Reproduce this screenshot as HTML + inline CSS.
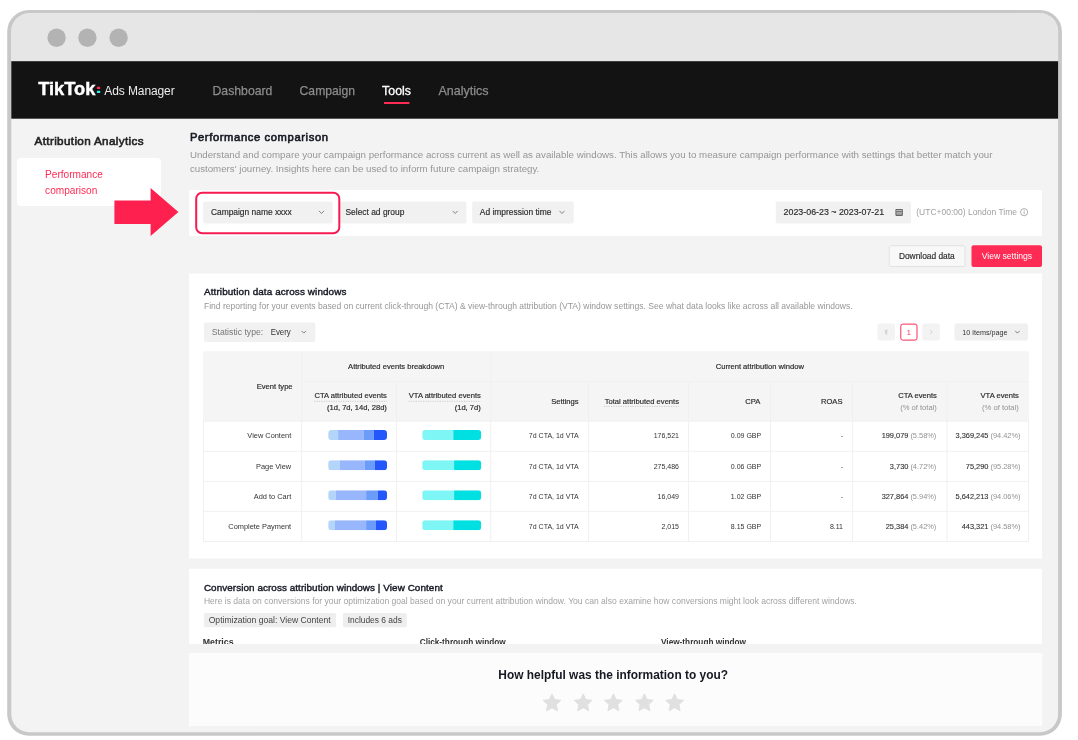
<!DOCTYPE html>
<html><head><meta charset="utf-8"><title>TikTok Ads Manager - Performance comparison</title>
<style>html,body{margin:0;padding:0;background:#fff;width:1078px;height:740px;overflow:hidden}svg{display:block;will-change:transform}text{font-family:"Liberation Sans", sans-serif}</style>
</head><body>
<svg width="1078" height="740" viewBox="0 0 1078 740" font-family='"Liberation Sans", sans-serif'><rect x="0.00" y="0.00" width="1078.00" height="740.00" fill="#ffffff"/>
<rect x="7.20" y="10.10" width="1054.70" height="725.60" fill="#c8c8c8" rx="21.5"/>
<defs><clipPath id="fc"><rect x="11.3" y="13.3" width="1046.8" height="718.9" rx="18"/></clipPath></defs>
<g clip-path="url(#fc)">
<rect x="11.00" y="13.00" width="1048.00" height="720.00" fill="#f3f3f3"/>
<rect x="11.00" y="13.00" width="1048.00" height="48.20" fill="#e6e6e6"/>
<circle cx="56.6" cy="37.8" r="9.2" fill="#b3b3b3"/>
<circle cx="87.4" cy="37.8" r="9.2" fill="#b3b3b3"/>
<circle cx="118.6" cy="37.8" r="9.2" fill="#b3b3b3"/>
<rect x="11.00" y="61.20" width="1048.00" height="57.50" fill="#131313"/>
<text x="38.20" y="94.70" font-size="19.0" fill="#ffffff" font-weight="bold" textLength="57.30" lengthAdjust="spacingAndGlyphs" stroke="#ffffff" stroke-width="0.45">TikTok</text>
<rect x="96.90" y="86.80" width="3.30" height="2.20" fill="#fe2c55" rx="0.6"/>
<rect x="96.90" y="90.80" width="3.30" height="2.20" fill="#25f4ee" rx="0.6"/>
<text x="104.30" y="94.60" font-size="12.0" fill="#ececec" textLength="70.40" lengthAdjust="spacing">Ads Manager</text>
<text x="212.50" y="94.50" font-size="12.6" fill="#8c8c8c" textLength="59.90" lengthAdjust="spacingAndGlyphs" stroke="#8c8c8c" stroke-width="0.25">Dashboard</text>
<text x="299.60" y="94.50" font-size="12.6" fill="#8c8c8c" textLength="55.40" lengthAdjust="spacingAndGlyphs" stroke="#8c8c8c" stroke-width="0.25">Campaign</text>
<text x="382.10" y="94.50" font-size="12.6" fill="#ffffff" textLength="28.90" lengthAdjust="spacingAndGlyphs" stroke="#ffffff" stroke-width="0.3">Tools</text>
<text x="438.50" y="94.50" font-size="12.6" fill="#8c8c8c" textLength="50.10" lengthAdjust="spacingAndGlyphs" stroke="#8c8c8c" stroke-width="0.25">Analytics</text>
<rect x="384.00" y="102.00" width="25.40" height="2.00" fill="#fe2c55"/>
<text x="34.60" y="145.30" font-size="11.7" fill="#222222" textLength="108.90" lengthAdjust="spacing" stroke="#222222" stroke-width="0.6">Attribution Analytics</text>
<rect x="17.00" y="158.00" width="144.00" height="48.00" fill="#ffffff" rx="4"/>
<text x="45.10" y="178.00" font-size="10.1" fill="#fe2c55">Performance</text>
<text x="45.10" y="193.90" font-size="10.1" fill="#fe2c55">comparison</text>
<polygon points="114.4,200.4 150.6,200.4 150.6,188.1 178.4,212 150.6,236.1 150.6,224 114.4,224" fill="#fe2150"/>
<text x="189.90" y="141.00" font-size="11.2" fill="#161823" textLength="138.10" lengthAdjust="spacing" stroke="#161823" stroke-width="0.6">Performance comparison</text>
<text x="189.90" y="157.60" font-size="9.73" fill="#969696">Understand and compare your campaign performance across current as well as available windows. This allows you to measure campaign performance with settings that better match your</text>
<text x="189.90" y="171.50" font-size="9.73" fill="#969696">customers&#x27; journey. Insights here can be used to inform future campaign strategy.</text>
<rect x="189.00" y="190.00" width="853.00" height="46.00" fill="#ffffff"/>
<rect x="203.20" y="201.40" width="129.40" height="22.20" fill="#f1f1f1" rx="2"/>
<text x="210.90" y="215.20" font-size="8.42" fill="#2a2a2a" stroke="#2a2a2a" stroke-width="0.15">Campaign name xxxx</text>
<path d="M319.00 210.90 L321.50 213.50 L324.00 210.90" fill="none" stroke="#777" stroke-width="0.9"/>
<rect x="340.00" y="201.40" width="126.50" height="22.20" fill="#f1f1f1" rx="2"/>
<text x="345.50" y="215.20" font-size="8.42" fill="#2a2a2a" stroke="#2a2a2a" stroke-width="0.15">Select ad group</text>
<path d="M452.70 210.90 L455.20 213.50 L457.70 210.90" fill="none" stroke="#777" stroke-width="0.9"/>
<rect x="472.20" y="201.40" width="101.50" height="22.20" fill="#f1f1f1" rx="2"/>
<text x="479.80" y="215.20" font-size="8.44" fill="#2a2a2a" stroke="#2a2a2a" stroke-width="0.15">Ad impression time</text>
<path d="M559.50 210.90 L562.00 213.50 L564.50 210.90" fill="none" stroke="#777" stroke-width="0.9"/>
<rect x="196.20" y="192.80" width="143.10" height="40.50" fill="none" rx="6" stroke="#f51a50" stroke-width="2"/>
<rect x="775.80" y="201.50" width="135.20" height="21.90" fill="#f1f1f1" rx="2"/>
<text x="783.60" y="215.30" font-size="8.85" fill="#2a2a2a" stroke="#2a2a2a" stroke-width="0.15">2023-06-23 ~ 2023-07-21</text>
<rect x="895.40" y="209.00" width="7.50" height="6.90" fill="#666666" rx="0.8"/>
<rect x="896.20" y="210.40" width="5.90" height="0.70" fill="#f1f1f1"/>
<rect x="896.40" y="211.90" width="5.50" height="2.80" fill="#a8a8a8"/>
<text x="916.30" y="215.30" font-size="8.49" fill="#a0a0a0">(UTC+00:00) London Time</text>
<circle cx="1024.1" cy="212.2" r="3.6" fill="none" stroke="#999" stroke-width="0.8"/>
<rect x="1023.70" y="211.30" width="0.80" height="3.00" fill="#999"/>
<rect x="1023.70" y="209.90" width="0.80" height="0.70" fill="#999"/>
<rect x="889.20" y="245.70" width="75.80" height="20.90" fill="#f8f8f8" rx="2" stroke="#e2e2e2" stroke-width="1"/>
<text x="898.90" y="258.90" font-size="8.4" fill="#2a2a2a" stroke="#2a2a2a" stroke-width="0.15">Download data</text>
<rect x="971.50" y="245.20" width="70.50" height="21.90" fill="#fe2c55" rx="2"/>
<text x="981.70" y="258.90" font-size="8.6" fill="#ffffff">View settings</text>
<rect x="189.00" y="273.50" width="853.00" height="285.00" fill="#ffffff"/>
<text x="204.00" y="295.20" font-size="9.9" fill="#161823" textLength="142.40" lengthAdjust="spacing" stroke="#161823" stroke-width="0.42">Attribution data across windows</text>
<text x="204.00" y="308.90" font-size="8.55" fill="#969696">Find reporting for your events based on current click-through (CTA) &amp; view-through attribution (VTA) window settings. See what data looks like across all available windows.</text>
<rect x="203.90" y="322.50" width="111.40" height="19.50" fill="#f1f1f1" rx="2"/>
<text x="211.70" y="334.70" font-size="8.68" fill="#777777">Statistic type:</text>
<text x="270.70" y="334.70" font-size="8.6" fill="#333333" textLength="20.10" lengthAdjust="spacingAndGlyphs">Every</text>
<path d="M301.60 330.90 L303.80 333.10 L306.00 330.90" fill="none" stroke="#666" stroke-width="0.8"/>
<rect x="877.50" y="323.60" width="17.50" height="17.00" fill="#f3f3f3" rx="2"/>
<path d="M885.10 329.90 L886.20 334.30 L887.30 329.90" fill="none" stroke="#c8c8c8" stroke-width="0.8"/>
<rect x="900.80" y="324.10" width="16.20" height="16.00" fill="#ffffff" rx="2" stroke="#fe2c55" stroke-width="1"/>
<text x="908.90" y="335.00" font-size="7.4" fill="#fe2c55" text-anchor="middle">1</text>
<rect x="922.30" y="323.60" width="17.60" height="17.00" fill="#f3f3f3" rx="2"/>
<rect x="954.50" y="323.60" width="73.50" height="17.00" fill="#f0f0f0" rx="2"/>
<text x="962.30" y="335.00" font-size="7.7" fill="#333333" textLength="45.20" lengthAdjust="spacingAndGlyphs">10 items/page</text>
<path d="M1015.20 330.90 L1017.40 333.10 L1019.60 330.90" fill="none" stroke="#666" stroke-width="0.8"/>
<path d="M887.3 329.9 L885.1 332.1 L887.3 334.3" fill="none" stroke="#cccccc" stroke-width="0.8"/>
<path d="M930.0 329.9 L932.2 332.1 L930.0 334.3" fill="none" stroke="#cccccc" stroke-width="0.8"/>
<rect x="203.00" y="351.20" width="826.00" height="69.90" fill="#f5f5f5"/>
<rect x="301.70" y="381.00" width="727.30" height="1.00" fill="#f0f0f0"/>
<rect x="203.00" y="420.60" width="826.00" height="1.00" fill="#f0f0f0"/>
<rect x="203.00" y="450.80" width="826.00" height="1.00" fill="#f0f0f0"/>
<rect x="203.00" y="480.90" width="826.00" height="1.00" fill="#f0f0f0"/>
<rect x="203.00" y="510.80" width="826.00" height="1.00" fill="#f0f0f0"/>
<rect x="203.00" y="541.00" width="826.00" height="1.00" fill="#f0f0f0"/>
<rect x="203.00" y="421.10" width="1.00" height="120.40" fill="#f0f0f0"/>
<rect x="1028.00" y="421.10" width="1.00" height="120.40" fill="#f0f0f0"/>
<rect x="301.20" y="351.20" width="1.00" height="190.30" fill="#f0f0f0"/>
<rect x="490.20" y="351.20" width="1.00" height="190.30" fill="#f0f0f0"/>
<rect x="396.00" y="381.50" width="1.00" height="160.00" fill="#f0f0f0"/>
<rect x="588.10" y="381.50" width="1.00" height="160.00" fill="#f0f0f0"/>
<rect x="687.90" y="381.50" width="1.00" height="160.00" fill="#f0f0f0"/>
<rect x="770.00" y="381.50" width="1.00" height="160.00" fill="#f0f0f0"/>
<rect x="852.10" y="381.50" width="1.00" height="160.00" fill="#f0f0f0"/>
<rect x="946.50" y="381.50" width="1.00" height="160.00" fill="#f0f0f0"/>
<text x="292.60" y="389.40" font-size="7.6" fill="#2b2b2b" text-anchor="end" stroke="#2b2b2b" stroke-width="0.18">Event type</text>
<text x="396.20" y="369.00" font-size="7.6" fill="#2b2b2b" text-anchor="middle" stroke="#2b2b2b" stroke-width="0.18">Attributed events breakdown</text>
<text x="759.80" y="369.00" font-size="7.6" fill="#2b2b2b" text-anchor="middle" stroke="#2b2b2b" stroke-width="0.18">Current attribution window</text>
<text x="386.90" y="398.10" font-size="7.6" fill="#2b2b2b" text-anchor="end" stroke="#2b2b2b" stroke-width="0.18">CTA attributed events</text>
<text x="386.90" y="409.50" font-size="7.6" fill="#2b2b2b" text-anchor="end" stroke="#2b2b2b" stroke-width="0.18">(1d, 7d, 14d, 28d)</text>
<text x="480.80" y="398.10" font-size="7.6" fill="#2b2b2b" text-anchor="end" stroke="#2b2b2b" stroke-width="0.18">VTA attributed events</text>
<text x="480.80" y="409.50" font-size="7.6" fill="#2b2b2b" text-anchor="end" stroke="#2b2b2b" stroke-width="0.18">(1d, 7d)</text>
<text x="578.60" y="404.00" font-size="7.6" fill="#2b2b2b" text-anchor="end" stroke="#2b2b2b" stroke-width="0.18">Settings</text>
<text x="679.00" y="404.00" font-size="7.6" fill="#2b2b2b" text-anchor="end" stroke="#2b2b2b" stroke-width="0.18">Total attributed events</text>
<text x="760.30" y="404.00" font-size="7.6" fill="#2b2b2b" text-anchor="end" stroke="#2b2b2b" stroke-width="0.18">CPA</text>
<text x="842.50" y="404.00" font-size="7.6" fill="#2b2b2b" text-anchor="end" stroke="#2b2b2b" stroke-width="0.18">ROAS</text>
<text x="936.90" y="398.10" font-size="7.6" fill="#2b2b2b" text-anchor="end" stroke="#2b2b2b" stroke-width="0.18">CTA events</text>
<text x="936.90" y="409.60" font-size="7.6" fill="#929292" text-anchor="end">(% of total)</text>
<text x="1018.80" y="398.10" font-size="7.6" fill="#2b2b2b" text-anchor="end" stroke="#2b2b2b" stroke-width="0.18">VTA events</text>
<text x="1018.80" y="409.60" font-size="7.6" fill="#929292" text-anchor="end">(% of total)</text>
<line x1="314.2" y1="401.3" x2="386.9" y2="401.3" stroke="#b8b8b8" stroke-width="0.7" stroke-dasharray="1.2 1.2"/>
<line x1="408.6" y1="401.3" x2="480.8" y2="401.3" stroke="#b8b8b8" stroke-width="0.7" stroke-dasharray="1.2 1.2"/>
<line x1="603.8" y1="406.4" x2="679" y2="406.4" stroke="#b8b8b8" stroke-width="0.7" stroke-dasharray="1.2 1.2"/>
<defs>
<clipPath id="cb0"><rect x="328.2" y="430.0" width="58.8" height="10" rx="3.2"/></clipPath>
<clipPath id="vb0"><rect x="422.2" y="430.0" width="59" height="10" rx="3.2"/></clipPath>
<clipPath id="cb1"><rect x="328.2" y="460.2" width="58.8" height="10" rx="3.2"/></clipPath>
<clipPath id="vb1"><rect x="422.2" y="460.2" width="59" height="10" rx="3.2"/></clipPath>
<clipPath id="cb2"><rect x="328.2" y="490.29999999999995" width="58.8" height="10" rx="3.2"/></clipPath>
<clipPath id="vb2"><rect x="422.2" y="490.29999999999995" width="59" height="10" rx="3.2"/></clipPath>
<clipPath id="cb3"><rect x="328.2" y="520.2" width="58.8" height="10" rx="3.2"/></clipPath>
<clipPath id="vb3"><rect x="422.2" y="520.2" width="59" height="10" rx="3.2"/></clipPath>
</defs>
<text x="291.20" y="438.40" font-size="7.4" fill="#333333" text-anchor="end">View Content</text>
<g clip-path="url(#cb0)">
<rect x="328.20" y="430.00" width="9.90" height="10.00" fill="#b4d5fa"/>
<rect x="338.10" y="430.00" width="25.70" height="10.00" fill="#97b6fb"/>
<rect x="363.80" y="430.00" width="10.10" height="10.00" fill="#6c9cfa"/>
<rect x="373.90" y="430.00" width="13.10" height="10.00" fill="#2356fb"/>
</g>
<g clip-path="url(#vb0)">
<rect x="422.20" y="430.00" width="31.10" height="10.00" fill="#7ef6f6"/>
<rect x="453.30" y="430.00" width="27.90" height="10.00" fill="#00dfe2"/>
</g>
<text x="578.80" y="438.40" font-size="7.0" fill="#333333" text-anchor="end">7d CTA, 1d VTA</text>
<text x="679.00" y="438.40" font-size="7.0" fill="#333333" text-anchor="end">176,521</text>
<text x="761.20" y="438.40" font-size="7.0" fill="#333333" text-anchor="end">0.09 GBP</text>
<text x="843.00" y="438.40" font-size="7.0" fill="#333333" text-anchor="end">-</text>
<text y="438.40" x="936.3" font-size="7.4" text-anchor="end"><tspan fill="#333" stroke="#333" stroke-width="0.12">199,079</tspan><tspan fill="#929292"> (5.58%)</tspan></text>
<text y="438.40" x="1020.5" font-size="7.4" text-anchor="end"><tspan fill="#333" stroke="#333" stroke-width="0.12">3,369,245</tspan><tspan fill="#929292"> (94.42%)</tspan></text>
<text x="291.20" y="468.55" font-size="7.4" fill="#333333" text-anchor="end">Page View</text>
<g clip-path="url(#cb1)">
<rect x="328.20" y="460.20" width="11.50" height="10.00" fill="#b4d5fa"/>
<rect x="339.70" y="460.20" width="25.20" height="10.00" fill="#97b6fb"/>
<rect x="364.90" y="460.20" width="10.00" height="10.00" fill="#6c9cfa"/>
<rect x="374.90" y="460.20" width="12.10" height="10.00" fill="#2356fb"/>
</g>
<g clip-path="url(#vb1)">
<rect x="422.20" y="460.20" width="31.90" height="10.00" fill="#7ef6f6"/>
<rect x="454.10" y="460.20" width="27.10" height="10.00" fill="#00dfe2"/>
</g>
<text x="578.80" y="468.55" font-size="7.0" fill="#333333" text-anchor="end">7d CTA, 1d VTA</text>
<text x="679.00" y="468.55" font-size="7.0" fill="#333333" text-anchor="end">275,486</text>
<text x="761.20" y="468.55" font-size="7.0" fill="#333333" text-anchor="end">0.06 GBP</text>
<text x="843.00" y="468.55" font-size="7.0" fill="#333333" text-anchor="end">-</text>
<text y="468.55" x="936.3" font-size="7.4" text-anchor="end"><tspan fill="#333" stroke="#333" stroke-width="0.12">3,730</tspan><tspan fill="#929292"> (4.72%)</tspan></text>
<text y="468.55" x="1020.5" font-size="7.4" text-anchor="end"><tspan fill="#333" stroke="#333" stroke-width="0.12">75,290</tspan><tspan fill="#929292"> (95.28%)</tspan></text>
<text x="291.20" y="498.55" font-size="7.4" fill="#333333" text-anchor="end">Add to Cart</text>
<g clip-path="url(#cb2)">
<rect x="328.20" y="490.30" width="7.60" height="10.00" fill="#b4d5fa"/>
<rect x="335.80" y="490.30" width="30.30" height="10.00" fill="#97b6fb"/>
<rect x="366.10" y="490.30" width="11.80" height="10.00" fill="#6c9cfa"/>
<rect x="377.90" y="490.30" width="9.10" height="10.00" fill="#2356fb"/>
</g>
<g clip-path="url(#vb2)">
<rect x="422.20" y="490.30" width="31.90" height="10.00" fill="#7ef6f6"/>
<rect x="454.10" y="490.30" width="27.10" height="10.00" fill="#00dfe2"/>
</g>
<text x="578.80" y="498.55" font-size="7.0" fill="#333333" text-anchor="end">7d CTA, 1d VTA</text>
<text x="679.00" y="498.55" font-size="7.0" fill="#333333" text-anchor="end">16,049</text>
<text x="761.20" y="498.55" font-size="7.0" fill="#333333" text-anchor="end">1.02 GBP</text>
<text x="843.00" y="498.55" font-size="7.0" fill="#333333" text-anchor="end">-</text>
<text y="498.55" x="936.3" font-size="7.4" text-anchor="end"><tspan fill="#333" stroke="#333" stroke-width="0.12">327,864</tspan><tspan fill="#929292"> (5.94%)</tspan></text>
<text y="498.55" x="1020.5" font-size="7.4" text-anchor="end"><tspan fill="#333" stroke="#333" stroke-width="0.12">5,642,213</tspan><tspan fill="#929292"> (94.06%)</tspan></text>
<text x="291.20" y="528.60" font-size="7.4" fill="#333333" text-anchor="end">Complete Payment</text>
<g clip-path="url(#cb3)">
<rect x="328.20" y="520.20" width="6.80" height="10.00" fill="#b4d5fa"/>
<rect x="335.00" y="520.20" width="31.10" height="10.00" fill="#97b6fb"/>
<rect x="366.10" y="520.20" width="9.90" height="10.00" fill="#6c9cfa"/>
<rect x="376.00" y="520.20" width="11.00" height="10.00" fill="#2356fb"/>
</g>
<g clip-path="url(#vb3)">
<rect x="422.20" y="520.20" width="31.10" height="10.00" fill="#7ef6f6"/>
<rect x="453.30" y="520.20" width="27.90" height="10.00" fill="#00dfe2"/>
</g>
<text x="578.80" y="528.60" font-size="7.0" fill="#333333" text-anchor="end">7d CTA, 1d VTA</text>
<text x="679.00" y="528.60" font-size="7.0" fill="#333333" text-anchor="end">2,015</text>
<text x="761.20" y="528.60" font-size="7.0" fill="#333333" text-anchor="end">8.15 GBP</text>
<text x="843.00" y="528.60" font-size="7.0" fill="#333333" text-anchor="end">8.11</text>
<text y="528.60" x="936.3" font-size="7.4" text-anchor="end"><tspan fill="#333" stroke="#333" stroke-width="0.12">25,384</tspan><tspan fill="#929292"> (5.42%)</tspan></text>
<text y="528.60" x="1020.5" font-size="7.4" text-anchor="end"><tspan fill="#333" stroke="#333" stroke-width="0.12">443,321</tspan><tspan fill="#929292"> (94.58%)</tspan></text>
<rect x="189.00" y="568.80" width="853.00" height="75.20" fill="#ffffff"/>
<text x="203.90" y="591.40" font-size="9.9" fill="#161823" textLength="238.80" lengthAdjust="spacing" stroke="#161823" stroke-width="0.42">Conversion across attribution windows | View Content</text>
<text x="203.90" y="603.90" font-size="8.56" fill="#a2a2a2">Here is data on conversions for your optimization goal based on your current attribution window. You can also examine how conversions might look across different windows.</text>
<rect x="203.90" y="612.90" width="132.20" height="14.40" fill="#eeeeee" rx="2"/>
<text x="208.70" y="622.80" font-size="8.59" fill="#444444">Optimization goal: View Content</text>
<rect x="342.90" y="612.90" width="63.90" height="14.40" fill="#eeeeee" rx="2"/>
<text x="347.70" y="622.80" font-size="8.42" fill="#444444">Includes 6 ads</text>
<clipPath id="c2"><rect x="189" y="630" width="853" height="14"/></clipPath>
<g clip-path="url(#c2)">
<text x="202.80" y="645.00" font-size="8.8" fill="#333333" font-weight="bold">Metrics</text>
<text x="419.70" y="645.00" font-size="8.24" fill="#333333" font-weight="bold">Click-through window</text>
<text x="661.00" y="645.00" font-size="8.24" fill="#333333" font-weight="bold">View-through window</text>
</g>
<rect x="189.00" y="653.00" width="853.20" height="73.00" fill="#fcfcfc"/>
<text x="498.30" y="679.00" font-size="12.2" fill="#161823" font-weight="bold" textLength="229.70" lengthAdjust="spacingAndGlyphs">How helpful was the information to you?</text>
<polygon points="552.00,693.90 549.35,699.56 543.16,700.33 547.72,704.59 546.53,710.72 552.00,707.70 557.47,710.72 556.28,704.59 560.84,700.33 554.65,699.56" fill="#e0e0e0" stroke="#e0e0e0" stroke-width="1.0" stroke-linejoin="round"/>
<polygon points="583.20,693.90 580.55,699.56 574.36,700.33 578.92,704.59 577.73,710.72 583.20,707.70 588.67,710.72 587.48,704.59 592.04,700.33 585.85,699.56" fill="#e0e0e0" stroke="#e0e0e0" stroke-width="1.0" stroke-linejoin="round"/>
<polygon points="613.40,693.90 610.75,699.56 604.56,700.33 609.12,704.59 607.93,710.72 613.40,707.70 618.87,710.72 617.68,704.59 622.24,700.33 616.05,699.56" fill="#e0e0e0" stroke="#e0e0e0" stroke-width="1.0" stroke-linejoin="round"/>
<polygon points="644.40,693.90 641.75,699.56 635.56,700.33 640.12,704.59 638.93,710.72 644.40,707.70 649.87,710.72 648.68,704.59 653.24,700.33 647.05,699.56" fill="#e0e0e0" stroke="#e0e0e0" stroke-width="1.0" stroke-linejoin="round"/>
<polygon points="674.60,693.90 671.95,699.56 665.76,700.33 670.32,704.59 669.13,710.72 674.60,707.70 680.07,710.72 678.88,704.59 683.44,700.33 677.25,699.56" fill="#e0e0e0" stroke="#e0e0e0" stroke-width="1.0" stroke-linejoin="round"/>
</g></svg>
</body></html>
